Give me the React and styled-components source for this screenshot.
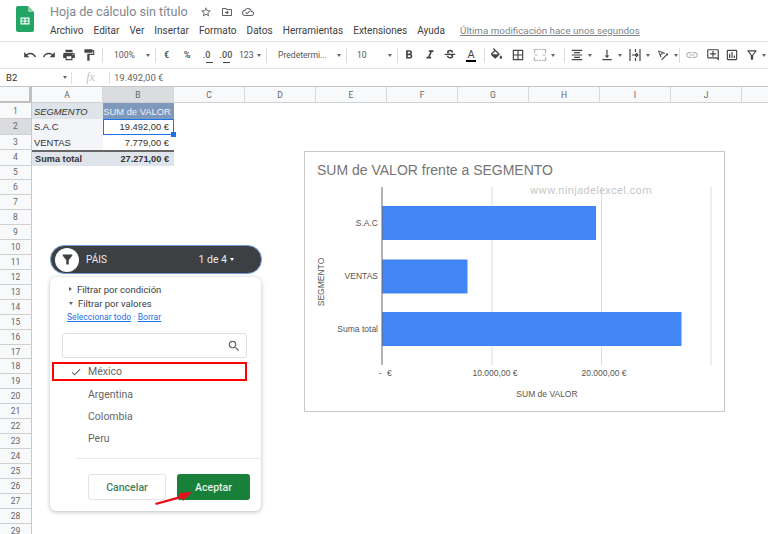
import styled, { createGlobalStyle } from "styled-components";
import {
  MdUndo, MdRedo, MdPrint, MdFormatPaint, MdFormatBold, MdFormatItalic, MdStrikethroughS,
  MdBorderAll, MdFormatAlignCenter, MdVerticalAlignBottom,
  MdTextRotationAngleup, MdLink, MdOutlineAddComment, MdOutlineInsertChart, MdOutlineFilterAlt,
  MdStarBorder, MdOutlineDriveFileMove, MdOutlineCloudDone, MdFilterAlt, MdSearch, MdCheck,
} from "react-icons/md";

const Global = createGlobalStyle`
  html, body { margin: 0; padding: 0; background: #fff; }
  body { width: 768px; height: 534px; overflow: hidden; font-family: Roboto, "Liberation Sans", sans-serif; }
  * { box-sizing: border-box; }
`;

const menus = ["Archivo", "Editar", "Ver", "Insertar", "Formato", "Datos", "Herramientas", "Extensiones", "Ayuda"];
const columns = ["A", "B", "C", "D", "E", "F", "G", "H", "I", "J", ""];
const rows = Array.from({ length: 29 }, (_, i) => i + 1);
const values = ["México", "Argentina", "Colombia", "Peru"];

const Caret = ({ dark }) => <CaretMark $dark={dark} />;

const SheetsLogo = () => (
  <LogoSvg viewBox="0 0 18 26" aria-hidden="true">
    <path d="M2 0h10l6 6v18a2 2 0 0 1-2 2H2a2 2 0 0 1-2-2V2a2 2 0 0 1 2-2z" fill="#23a566" />
    <path d="M12 0l6 6h-4.5A1.5 1.5 0 0 1 12 4.500z" fill="#8ed1b1" />
    <path d="M4.500 11.500h9v7h-9z M5.700 12.700v1.700h2.700v-1.700z M9.600 12.700v1.700h2.700v-1.700z M5.700 15.600v1.700h2.700v-1.700z M9.600 15.600v1.700h2.700v-1.700z" fill="#fff" fillRule="evenodd" />
  </LogoSvg>
);

// dashed merge cells icon
const MergeIcon = () => (
  <svg viewBox="0 0 14 14" width="14" height="14" fill="none" stroke="currentColor" strokeWidth="1.2">
    <path d="M1.500 5V1.500H5M9 1.500h3.500V5M1.500 9v3.500H5M9 12.500h3.500V9" />
    <path d="M1.500 7h3M9.500 7h3M6 1.500h2M6 12.500h2" />
  </svg>
);

// text overflow icon: bar on the left, dashed line with an arrow through it
const WrapIcon = () => (
  <svg viewBox="0 0 14 14" width="14" height="14" fill="none" stroke="currentColor" strokeWidth="1.2">
    <path d="M2 1v12M12 1v12M7.500 1v3M7.500 6v2M7.500 10v3M4 7h6" />
    <path d="M8 5l2 2-2 2" />
  </svg>
);

// paint bucket without the colour bar under it
const BucketIcon = () => (
  <svg viewBox="0 0 24 24" width="15" height="15" fill="currentColor">
    <path d="M16.560 8.940L7.620 0 6.210 1.410l2.380 2.380-5.150 5.150c-.59.59-.59 1.540 0 2.120l5.500 5.500c.29.29.68.44 1.060.44s.77-.15 1.060-.44l5.500-5.500c.59-.58.59-1.530 0-2.120zM5.210 10L10 5.210 14.790 10H5.210zM19 11.500s-2 2.170-2 3.500c0 1.100.9 2 2 2s2-.9 2-2c0-1.330-2-3.500-2-3.500z" />
  </svg>
);

const App = () => (
  <Page>
    <Global />
    <TopBar>
      <SheetsLogo />
      <TitleBlock>
        <TitleRow>
          <Title>Hoja de cálculo sin título</Title>
          <TitleIcons>
            <MdStarBorder />
            <MdOutlineDriveFileMove />
            <MdOutlineCloudDone />
          </TitleIcons>
        </TitleRow>
        <MenuRow>
          {menus.map((m) => <MenuItem key={m}>{m}</MenuItem>)}
          <LastEdit>Última modificación hace unos segundos</LastEdit>
        </MenuRow>
      </TitleBlock>
    </TopBar>

    <Toolbar>
      <Tool $w={19.6}><MdUndo /></Tool>
      <Tool $w={19.6}><MdRedo /></Tool>
      <Tool $w={19.6}><MdPrint /></Tool>
      <Tool $w={19.6}><MdFormatPaint /></Tool>
      <Sep $left={3.6} />
      <SelectTool $w={52} $pl={11}>100%<Caret /></SelectTool>
      <Sep />
      <Tool $w={21}><Glyph $bold>€</Glyph></Tool>
      <Tool $w={20}><Glyph $bold>%</Glyph></Tool>
      <Tool $w={19}><Glyph>.0<Under /></Glyph></Tool>
      <Tool $w={20}><Glyph>.00<Under /></Glyph></Tool>
      <SelectTool $w={30} $pl={3}>123<Caret /></SelectTool>
      <Sep />
      <SelectTool $w={79} $pl={11}>Predetermi...<Caret /></SelectTool>
      <Sep />
      <SelectTool $w={50} $pl={10}>10<Caret /></SelectTool>
      <Sep />
      <Tool $w={22}><MdFormatBold /></Tool>
      <Tool $w={20}><MdFormatItalic /></Tool>
      <Tool $w={21}><MdStrikethroughS /></Tool>
      <Tool $w={20}><TextColor>A</TextColor></Tool>
      <Sep $left={3} />
      <Tool $w={24}><BucketIcon /></Tool>
      <Tool $w={19}><MdBorderAll /></Tool>
      <SplitTool $w={36} $muted><MergeIcon /><Caret /></SplitTool>
      <Sep />
      <SplitTool $w={30}><MdFormatAlignCenter /><Caret /></SplitTool>
      <SplitTool $w={28}><MdVerticalAlignBottom /><Caret /></SplitTool>
      <SplitTool $w={28}><WrapIcon /><Caret /></SplitTool>
      <SplitTool $w={28}><MdTextRotationAngleup /><Caret /></SplitTool>
      <Sep />
      <Tool $w={24} $muted><MdLink /></Tool>
      <Tool $w={18}><MdOutlineAddComment /></Tool>
      <Tool $w={20}><MdOutlineInsertChart /></Tool>
      <Tool $w={20}><MdOutlineFilterAlt /></Tool>
      <Caret />
    </Toolbar>

    <FormulaBar>
      <NameBox>B2<Caret /></NameBox>
      <FormulaSep />
      <FxMark>fx</FxMark>
      <FormulaSep />
      <FormulaValue>19.492,00 €</FormulaValue>
    </FormulaBar>

    <Sheet>
      <ColumnHeaders>
        <Corner />
        {columns.map((c, i) => <ColumnHead key={i} $active={c === "B"}>{c}</ColumnHead>)}
      </ColumnHeaders>

      <Grid>
        <RowHead>1</RowHead>
        <Cell $bg="#dfe3ea" $italic>SEGMENTO</Cell>
        <Cell $bg="#7f99bd" $color="#eef1f6" $align="center">SUM de VALOR</Cell>

        <RowHead $active>2</RowHead>
        <Cell $bg="#f3f5f9">S.A.C</Cell>
        <SelectedCell>19.492,00 €<Handle /></SelectedCell>

        <RowHead>3</RowHead>
        <Cell $bg="#f3f5f9">VENTAS</Cell>
        <Cell $align="right">7.779,00 €</Cell>

        <RowHead>4</RowHead>
        <TotalCell>Suma total</TotalCell>
        <TotalCell $align="right">27.271,00 €</TotalCell>

        {rows.slice(4).map((r) => <RowHead key={r}>{r}</RowHead>)}
      </Grid>

      <ChartCard>
        <ChartTitle>SUM de VALOR frente a SEGMENTO</ChartTitle>
        <Watermark>www.ninjadelexcel.com</Watermark>
        <ChartSvg viewBox="0 0 419 222" width="419" height="222">
          <g transform="translate(-305 -189)">
            {[492, 601.5, 711].map((x) => (
              <line key={x} x1={x} x2={x} y1="187" y2="365" stroke="#dcdcdc" strokeWidth="1" />
            ))}
            <rect x="382" y="206" width="214" height="34" fill="#4285f4" />
            <rect x="382" y="259.500" width="85.500" height="34" fill="#4285f4" />
            <rect x="382" y="312" width="299.500" height="34" fill="#4285f4" />
            <line x1="382" x2="382" y1="187" y2="365" stroke="#666" strokeWidth="1" />
            <AxisText x="378" y="226" textAnchor="end">S.A.C</AxisText>
            <AxisText x="378" y="279" textAnchor="end">VENTAS</AxisText>
            <AxisText x="378" y="332" textAnchor="end">Suma total</AxisText>
            <AxisText x="379" y="376">-</AxisText>
            <AxisText x="387" y="376">€</AxisText>
            <AxisText x="495" y="376" textAnchor="middle">10.000,00 €</AxisText>
            <AxisText x="604" y="376" textAnchor="middle">20.000,00 €</AxisText>
            <AxisText x="547" y="397" textAnchor="middle">SUM de VALOR</AxisText>
            <AxisText x="324" y="282" textAnchor="middle" transform="rotate(-90 324 282)">SEGMENTO</AxisText>
          </g>
        </ChartSvg>
      </ChartCard>

      <Slicer>
        <SlicerPill>
          <FilterBadge><MdFilterAlt /></FilterBadge>
          <PillLabel>PÁIS</PillLabel>
          <PillCount>1 de 4<Caret dark /></PillCount>
        </SlicerPill>
        <SlicerPanel>
          <FilterHeading><SideCaret />Filtrar por condición</FilterHeading>
          <FilterHeading><Caret />Filtrar por valores</FilterHeading>
          <Links><a>Seleccionar todo</a> · <a>Borrar</a></Links>
          <SearchBox><MdSearch /></SearchBox>
          <ValueList>
            {values.map((v, i) => (
              <ValueRow key={v} $picked={i === 0}>
                <CheckSlot>{i === 0 && <MdCheck />}</CheckSlot>
                {v}
              </ValueRow>
            ))}
          </ValueList>
          <Divider />
          <Actions>
            <CancelButton>Cancelar</CancelButton>
            <AcceptButton>Aceptar</AcceptButton>
          </Actions>
        </SlicerPanel>
        <Arrow viewBox="0 0 40 16" width="40" height="16">
          <path d="M1 14L26 7l-1-3 13-1-9 9-1-3L2 16z" fill="#e8101c" />
        </Arrow>
      </Slicer>
    </Sheet>
  </Page>
);

export default App;

/* ---------- page + header ---------- */

const Page = styled.div`
  width: 768px;
  height: 534px;
  overflow: hidden;
  background: #fff;
`;

const TopBar = styled.div`
  display: flex;
  height: 41px;
  padding: 6px 0 0 16px;
`;

const LogoSvg = styled.svg`
  width: 18px;
  height: 26px;
  flex: none;
`;

const TitleBlock = styled.div`
  margin-left: 16px;
`;

const TitleRow = styled.div`
  display: flex;
  align-items: center;
  height: 11px;
`;

const Title = styled.div`
  font-size: 12.6px;
  color: #80868b;
  white-space: nowrap;
`;

const TitleIcons = styled.div`
  display: flex;
  gap: 9px;
  margin-left: 12px;
  font-size: 12px;
  color: #5f6368;
`;

const MenuRow = styled.div`
  display: flex;
  align-items: center;
  margin-top: 7px;
  height: 12px;
`;

const MenuItem = styled.span`
  font-size: 10px;
  color: #3c4043;
  margin-right: 10.100px;
  white-space: nowrap;
`;

const LastEdit = styled.span`
  margin-left: 5px;
  font-size: 9.800px;
  color: #80868b;
  text-decoration: underline;
  white-space: nowrap;
`;

/* ---------- toolbar ---------- */

const Toolbar = styled.div`
  display: flex;
  align-items: center;
  height: 28px;
  padding-left: 20px;
  border-top: 1px solid #e3e3e3;
  border-bottom: 1px solid #e3e3e3;
  color: #444;
`;

const Tool = styled.div`
  flex: none;
  width: ${(p) => p.$w}px;
  display: flex;
  align-items: center;
  justify-content: center;
  font-size: 14px;
  color: ${(p) => (p.$muted ? "#b5b5b5" : "#444")};
`;

const SplitTool = styled(Tool)`
  justify-content: flex-start;
  gap: 4px;
  padding-left: 5px;
`;

const SelectTool = styled.div`
  flex: none;
  width: ${(p) => p.$w}px;
  padding: 0 5px 0 ${(p) => p.$pl}px;
  display: flex;
  align-items: center;
  justify-content: space-between;
  font-size: 8.600px;
  color: #555;
  white-space: nowrap;
`;

const Sep = styled.div`
  flex: none;
  width: 1px;
  height: 15px;
  margin-left: ${(p) => p.$left || 0}px;
  background: #dadce0;
`;

const Glyph = styled.span`
  position: relative;
  font-size: 9px;
  font-weight: ${(p) => (p.$bold ? 700 : 500)};
  color: #555;
`;

const Under = styled.i`
  position: absolute;
  left: 3px;
  bottom: -3px;
  width: 7px;
  height: 1px;
  background: #444;
`;

const TextColor = styled.span`
  display: block;
  font-size: 11px;
  line-height: 11px;
  color: #444;
  padding: 0 1px;
  border-bottom: 2px solid #000;
`;

const CaretMark = styled.span`
  flex: none;
  width: 0;
  height: 0;
  border-left: 2.5px solid transparent;
  border-right: 2.5px solid transparent;
  border-top: 3px solid ${(p) => (p.$dark ? "#fff" : "#666")};
`;

const SideCaret = styled.span`
  flex: none;
  width: 0;
  height: 0;
  border-top: 2.5px solid transparent;
  border-bottom: 2.5px solid transparent;
  border-left: 3px solid #666;
`;

/* ---------- formula bar ---------- */

const FormulaBar = styled.div`
  display: flex;
  align-items: center;
  height: 17px;
`;

const NameBox = styled.div`
  width: 71px;
  padding: 0 4px 0 6px;
  display: flex;
  align-items: center;
  justify-content: space-between;
  font-size: 9.500px;
  color: #333;
`;

const FormulaSep = styled.div`
  width: 1px;
  height: 12px;
  background: #e0e0e0;
`;

const FxMark = styled.div`
  width: 37px;
  text-align: center;
  font: italic 12px "Liberation Serif", serif;
  color: #c4c4c4;
`;

const FormulaValue = styled.div`
  margin-left: 4px;
  font-size: 9.500px;
  color: #666;
`;

/* ---------- sheet ---------- */

const Sheet = styled.div`
  position: relative;
  height: 449px;
  overflow: hidden;
`;

const ColumnHeaders = styled.div`
  display: grid;
  grid-template-columns: 32px repeat(11, 71px);
  height: 17px;
  border-top: 1px solid #c7c7c7;
`;

const Corner = styled.div`
  background: #f8f9fa;
  border-right: 3px solid #c0c0c0;
  border-bottom: 2px solid #c0c0c0;
`;

const ColumnHead = styled.div`
  display: flex;
  align-items: center;
  justify-content: center;
  font-size: 8.500px;
  color: #666;
  background: ${(p) => (p.$active ? "#dadce0" : "#f8f9fa")};
  border-right: 1px solid #d8d8d8;
  border-bottom: 1px solid #d0d0d0;
`;

const Grid = styled.div`
  display: grid;
  grid-template-columns: 32px 71px 71px;
  grid-template-rows: 16px repeat(3, 15.500px) repeat(25, 14.930px);
`;

const RowHead = styled.div`
  grid-column: 1;
  display: flex;
  align-items: center;
  justify-content: center;
  font-size: 8.500px;
  color: #666;
  background: ${(p) => (p.$active ? "#dadce0" : "#f8f9fa")};
  border-right: 1px solid #c8c8c8;
  border-bottom: 1px solid #d0d0d0;
`;

const Cell = styled.div`
  display: flex;
  align-items: center;
  justify-content: ${(p) => (p.$align === "right" ? "flex-end" : p.$align === "center" ? "center" : "flex-start")};
  padding: 0 5px 0 2px;
  font: ${(p) => (p.$italic ? "italic" : "normal")} 9.400px "Liberation Sans", Arial, sans-serif;
  color: ${(p) => p.$color || "#333"};
  background: ${(p) => p.$bg || "#fff"};
  white-space: nowrap;
`;

const SelectedCell = styled(Cell)`
  position: relative;
  justify-content: flex-end;
  border: 1px solid #1a73e8;
  padding-right: 4px;
`;

const Handle = styled.i`
  position: absolute;
  right: -3px;
  bottom: -3px;
  width: 5px;
  height: 5px;
  background: #1a73e8;
`;

const TotalCell = styled(Cell)`
  font-size: 9.200px;
  font-weight: 700;
  padding-left: 3px;
  background: #dfe3ea;
  border-top: 2px solid #666;
`;

/* ---------- chart ---------- */

const ChartCard = styled.div`
  position: absolute;
  left: 304px;
  top: 65px;
  width: 421px;
  height: 261px;
  background: #fff;
  border: 1px solid #c8c8c8;
`;

const ChartTitle = styled.div`
  padding: 10px 0 0 12px;
  height: 37px;
  font: 14px "Liberation Sans", Arial, sans-serif;
  color: #757575;
  white-space: nowrap;
`;

const Watermark = styled.div`
  position: absolute;
  left: 225px;
  top: 32px;
  font-size: 11px;
  letter-spacing: 0.330px;
  color: #c9c9c9;
  white-space: nowrap;
`;

const ChartSvg = styled.svg`
  display: block;
  overflow: visible;
`;

const AxisText = styled.text`
  font: 8.500px "Liberation Sans", Arial, sans-serif;
  fill: #555;
`;

/* ---------- slicer ---------- */

const Slicer = styled.div`
  position: absolute;
  left: 50px;
  top: 159px;
  width: 212px;
`;

const SlicerPill = styled.div`
  display: flex;
  align-items: center;
  height: 29px;
  padding: 0 27px 0 4px;
  background: #3c4043;
  border: 1px solid #6f9bd8;
  border-radius: 15px;
  color: #e8eaed;
`;

const FilterBadge = styled.div`
  width: 24px;
  height: 24px;
  border-radius: 50%;
  background: #fff;
  color: #3c4043;
  display: flex;
  align-items: center;
  justify-content: center;
  font-size: 15px;
`;

const PillLabel = styled.div`
  margin-left: 7px;
  font-size: 10px;
`;

const PillCount = styled.div`
  margin-left: auto;
  display: flex;
  align-items: center;
  gap: 3px;
  font-size: 10.500px;
`;

const SlicerPanel = styled.div`
  margin-top: 3px;
  width: 211px;
  height: 234px;
  padding-top: 5px;
  background: #fff;
  border-radius: 6px;
  box-shadow: 0 1px 4px rgba(60, 64, 67, 0.35);
`;

const FilterHeading = styled.div`
  display: flex;
  align-items: center;
  gap: 5px;
  height: 14px;
  padding-left: 19px;
  font-size: 9.500px;
  color: #3c4043;
`;

const Links = styled.div`
  height: 14px;
  line-height: 14px;
  padding-left: 17px;
  font-size: 8.600px;
  color: #777;
  a {
    color: #1a73e8;
    text-decoration: underline;
  }
`;

const SearchBox = styled.div`
  margin: 9px 0 0 12px;
  width: 185px;
  height: 25px;
  padding-right: 5px;
  display: flex;
  align-items: center;
  justify-content: flex-end;
  border: 1px solid #e0e0e0;
  border-radius: 3px;
  font-size: 14px;
  color: #5f6368;
`;

const ValueList = styled.div`
  margin-top: 4px;
`;

const ValueRow = styled.div`
  display: flex;
  align-items: center;
  height: ${(p) => (p.$picked ? "19px" : "22.400px")};
  width: ${(p) => (p.$picked ? "195px" : "auto")};
  margin: ${(p) => (p.$picked ? "0 0 2px 2px" : "0 0 0 2px")};
  padding-left: ${(p) => (p.$picked ? "16px" : "18px")};
  border: ${(p) => (p.$picked ? "2px solid #f00" : "none")};
  font-size: 10.500px;
  color: #666;
`;

const CheckSlot = styled.span`
  display: flex;
  width: 18px;
  font-size: 12px;
  color: #666;
`;

const Divider = styled.div`
  margin: 8px 0 0 26px;
  height: 1px;
  background: #e8e8e8;
`;

const Actions = styled.div`
  display: flex;
  gap: 11px;
  margin: 15px 0 0 38px;
`;

const CancelButton = styled.div`
  width: 78px;
  height: 26px;
  display: flex;
  align-items: center;
  justify-content: center;
  border: 1px solid #e3e3e3;
  border-radius: 3px;
  font-size: 10.500px;
  font-weight: 500;
  color: #3f7f5d;
`;

const AcceptButton = styled(CancelButton)`
  width: 73px;
  border: none;
  background: #188038;
  color: #e6f2ea;
`;

const Arrow = styled.svg`
  position: absolute;
  left: 104px;
  top: 244px;
`;
